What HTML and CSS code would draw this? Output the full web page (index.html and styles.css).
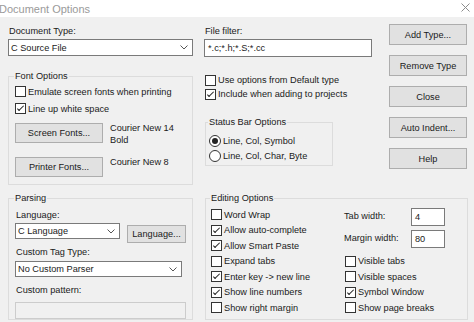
FILE: index.html
```html
<!DOCTYPE html>
<html lang="en">
<head>
    <meta charset="UTF-8">
    <title>Document Options</title>
    <link rel="stylesheet" href="styles.css">
</head>
<body>
    <div class="titlebar">
        <span class="title">Document Options</span>
        <svg class="close" width="9" height="9" viewBox="0 0 9 9">
            <path d="M0.5 0.5 L8.5 8.5 M8.5 0.5 L0.5 8.5" stroke="#8c8c8c" stroke-width="1" fill="none"/>
        </svg>
    </div>

    <div class="dialog">
        <div class="top">
            <!-- coluna esquerda -->
            <div class="col-left">
                <div class="field-label">Document Type:</div>
                <div class="combo combo-doc">
                    <span>C Source File</span>
                    <svg width="8" height="5" viewBox="0 0 8 5"><polyline points="0.5,0.5 4,4 7.5,0.5" fill="none" stroke="#555" stroke-width="1"/></svg>
                </div>

                <fieldset class="group group-font">
                    <legend>Font Options</legend>
                    <div class="check-row"><span class="box"></span>Emulate screen fonts when printing</div>
                    <div class="check-row"><span class="box checked"></span>Line up white space</div>
                    <div class="font-row">
                        <button class="btn btn-font">Screen Fonts...</button>
                        <div class="font-name">Courier New 14<br>Bold</div>
                    </div>
                    <div class="font-row second">
                        <button class="btn btn-font">Printer Fonts...</button>
                        <div class="font-name">Courier New 8</div>
                    </div>
                </fieldset>
            </div>

            <!-- coluna do meio -->
            <div class="col-mid">
                <div class="field-label">File filter:</div>
                <div class="textbox">*.c;*.h;*.S;*.cc</div>

                <div class="checks-mid">
                    <div class="check-row"><span class="box"></span>Use options from Default type</div>
                    <div class="check-row"><span class="box checked"></span>Include when adding to projects</div>
                </div>

                <fieldset class="group group-status">
                    <legend>Status Bar Options</legend>
                    <div class="radio-row"><span class="radio checked"></span>Line, Col, Symbol</div>
                    <div class="radio-row"><span class="radio"></span>Line, Col, Char, Byte</div>
                </fieldset>
            </div>

            <!-- botoes -->
            <div class="col-buttons">
                <button class="btn">Add Type...</button>
                <button class="btn">Remove Type</button>
                <button class="btn">Close</button>
                <button class="btn">Auto Indent...</button>
                <button class="btn">Help</button>
            </div>
        </div>

        <div class="bottom">
            <fieldset class="group group-parsing">
                <legend>Parsing</legend>
                <div class="field-label">Language:</div>
                <div class="lang-row">
                    <div class="combo combo-lang">
                        <span>C Language</span>
                        <svg width="8" height="5" viewBox="0 0 8 5"><polyline points="0.5,0.5 4,4 7.5,0.5" fill="none" stroke="#555" stroke-width="1"/></svg>
                    </div>
                    <button class="btn btn-lang">Language...</button>
                </div>
                <div class="field-label spaced">Custom Tag Type:</div>
                <div class="combo combo-tag">
                    <span>No Custom Parser</span>
                    <svg width="8" height="5" viewBox="0 0 8 5"><polyline points="0.5,0.5 4,4 7.5,0.5" fill="none" stroke="#555" stroke-width="1"/></svg>
                </div>
                <div class="field-label pattern-label">Custom pattern:</div>
                <div class="textbox disabled"></div>
            </fieldset>

            <fieldset class="group group-editing">
                <legend>Editing Options</legend>
                <div class="edit-cols">
                    <div class="edit-left">
                        <div class="edit-row"><span class="box"></span>Word Wrap</div>
                        <div class="edit-row"><span class="box checked"></span>Allow auto-complete</div>
                        <div class="edit-row"><span class="box checked"></span>Allow Smart Paste</div>
                        <div class="edit-row"><span class="box"></span>Expand tabs</div>
                        <div class="edit-row"><span class="box checked"></span>Enter key -&gt; new line</div>
                        <div class="edit-row"><span class="box checked"></span>Show line numbers</div>
                        <div class="edit-row"><span class="box"></span>Show right margin</div>
                    </div>
                    <div class="edit-right">
                        <div class="num-block">
                            <div class="num-row"><span class="num-label">Tab width:</span><div class="num-input">4</div></div>
                            <div class="num-row"><span class="num-label">Margin width:</span><div class="num-input">80</div></div>
                        </div>
                        <div class="edit-row"><span class="box"></span>Visible tabs</div>
                        <div class="edit-row"><span class="box"></span>Visible spaces</div>
                        <div class="edit-row"><span class="box checked"></span>Symbol Window</div>
                        <div class="edit-row"><span class="box"></span>Show page breaks</div>
                    </div>
                </div>
            </fieldset>
        </div>
    </div>
</body>
</html>
```

FILE: styles.css
```css
/* janela */
body {
    margin: 0;
    width: 474px;
    height: 322px;
    overflow: hidden;
    background: #f0f0f0;
    font-family: "Liberation Sans", Arial, sans-serif;
    font-size: 9.2px;
    line-height: 12px;
    color: #1a1a1a;
}

.titlebar {
    height: 17px;
    background: #fff;
    display: flex;
    align-items: center;
    justify-content: space-between;
    padding-right: 4px;
}

.title {
    margin-left: -1px;
    font-size: 11px;
    color: #9a9a9a;
}

.close {
    margin-top: -2px;
}

.dialog {
    padding: 8px 0 0 8px;
}

.top {
    display: flex;
    align-items: flex-start;
    height: 157px;
}

.col-left {
    width: 185px;
}

.col-mid {
    width: 168px;
    margin-left: 11px;
}

.col-buttons {
    width: 78px;
    margin-left: 17px;
    margin-top: -1px;
    display: flex;
    flex-direction: column;
    gap: 10px;
}

.field-label {
    padding-left: 1px;
    height: 12px;
}

/* controles */
.combo {
    box-sizing: border-box;
    margin-top: 2px;
    height: 17px;
    border: 1px solid #7a7a7a;
    background: #fff;
    display: flex;
    align-items: center;
    justify-content: space-between;
    padding: 0 4px 0 2px;
}

.textbox {
    box-sizing: border-box;
    margin-top: 2px;
    height: 18px;
    border: 1px solid #7a7a7a;
    background: #fff;
    padding-left: 3px;
    line-height: 16px;
}

.textbox.disabled {
    background: #f0f0f0;
    border-color: #cccccc;
    height: 17px;
    margin-top: 6px;
}

.btn {
    box-sizing: border-box;
    height: 21px;
    margin: 0;
    padding: 0;
    border: 1px solid #adadad;
    background: #e1e1e1;
    font-family: inherit;
    font-size: 9.2px;
    color: #1a1a1a;
}

.box {
    box-sizing: border-box;
    width: 11px;
    height: 11px;
    border: 1px solid #333;
    background: #fff;
    display: flex;
    align-items: center;
    justify-content: center;
    flex-shrink: 0;
}

.box.checked::after {
    content: "";
    width: 2px;
    height: 6px;
    border: solid #222;
    border-width: 0 1px 1px 0;
    transform: rotate(45deg);
    margin-top: -2px;
}

.radio {
    box-sizing: border-box;
    width: 12px;
    height: 12px;
    border: 1px solid #333;
    border-radius: 50%;
    background: #fff;
    display: flex;
    align-items: center;
    justify-content: center;
    flex-shrink: 0;
}

.radio.checked::after {
    content: "";
    width: 6px;
    height: 6px;
    border-radius: 50%;
    background: #222;
}

/* grupos */
.group {
    margin: 0;
    min-width: 0;
    border: 1px solid #dcdcdc;
}

.group legend {
    padding: 0 1px;
    margin-left: -1px;
    line-height: 12px;
}

.group-font {
    margin-top: 14px;
    padding: 1px 6px 7px;
}

.check-row {
    height: 17px;
    display: flex;
    align-items: center;
    gap: 2px;
}

.font-row {
    display: flex;
    align-items: flex-start;
    margin-top: 6px;
}

.font-row.second {
    margin-top: 11px;
}

.btn-font {
    width: 88px;
    height: 20px;
}

.font-name {
    margin-left: 7px;
    margin-top: -1px;
}

.checks-mid {
    margin-top: 16px;
    padding-left: 1px;
}

.checks-mid .check-row {
    height: 14px;
}

.group-status {
    margin-top: 15px;
    margin-left: 1px;
    width: 128px;
    box-sizing: border-box;
    padding: 5px 3px 2px;
}

.radio-row {
    height: 15px;
    display: flex;
    align-items: center;
    gap: 2px;
}

/* parte de baixo */
.bottom {
    display: flex;
    margin-top: 10px;
    height: 128px;
}

.group-parsing {
    box-sizing: border-box;
    width: 185px;
    padding: 5px 6px 0;
}

.lang-row {
    display: flex;
    align-items: flex-start;
    margin-top: 2px;
}

.combo-lang {
    width: 105px;
    height: 16px;
    margin-top: 0;
}

.btn-lang {
    width: 59px;
    height: 18px;
    margin-left: 7px;
    margin-top: 2px;
}

.field-label.spaced {
    margin-top: 3px;
}

.combo-tag {
    width: 167px;
    height: 16px;
    margin-top: 3px;
}

.pattern-label {
    margin-top: 7px;
}

.group-editing {
    box-sizing: border-box;
    width: 263px;
    margin-left: 12px;
    padding: 3px 5px 0;
}

.edit-cols {
    display: flex;
}

.edit-left {
    width: 133px;
}

.edit-row {
    height: 15.5px;
    display: flex;
    align-items: center;
    gap: 2px;
}

.edit-right .edit-row {
    margin-left: 1px;
}

.num-block {
    height: 46.5px;
    box-sizing: border-box;
    padding-top: 1px;
    display: flex;
    flex-direction: column;
    gap: 4px;
}

.num-row {
    display: flex;
    align-items: center;
    height: 18px;
}

.num-label {
    width: 67px;
    margin-top: -3px;
}

.num-input {
    box-sizing: border-box;
    width: 34px;
    height: 18px;
    border: 1px solid #7a7a7a;
    background: #fff;
    padding-left: 3px;
    line-height: 16px;
}
```
